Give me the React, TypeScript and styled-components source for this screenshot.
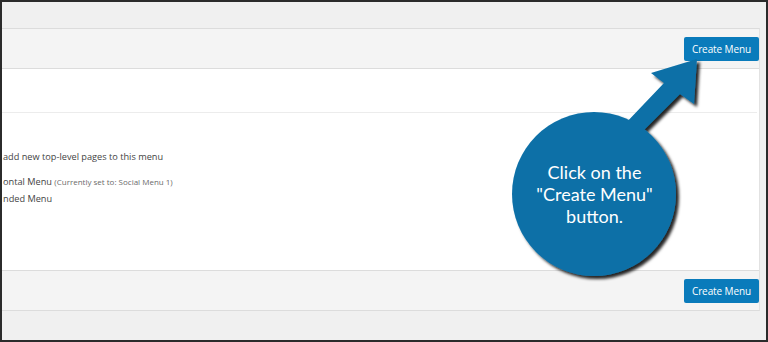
import React from 'react';
import styled, { createGlobalStyle } from 'styled-components';

const GlobalStyle = createGlobalStyle`
  html, body { margin: 0; padding: 0; }
  body { font-family: "Open Sans", "Liberation Sans", sans-serif; }
  * { box-sizing: border-box; }
`;

const Frame = styled.div`
  position: relative;
  width: 768px;
  height: 342px;
  border: 2px solid #2b2b2b;
  background: #f0f0f0;
  display: flex;
  flex-direction: column;
  overflow: hidden;
`;

const TopGap = styled.div`
  height: 26px;
  flex: none;
`;

const Panel = styled.div`
  margin-right: 6px;
  border-top: 1px solid #dcdcdc;
  border-bottom: 1px solid #dcdcdc;
  border-right: 1px solid #e2e2e2;
  display: flex;
  flex-direction: column;
`;

const Bar = styled.div<{ $top?: boolean }>`
  height: 40px;
  background: #f4f4f4;
  display: flex;
  align-items: center;
  justify-content: flex-end;
  ${p => (p.$top ? 'border-bottom: 1px solid #dcdcdc;' : 'border-top: 1px solid #dcdcdc;')}
`;

const Button = styled.button`
  height: 24px;
  width: 75px;
  padding: 0;
  border: none;
  border-radius: 2px;
  background: #0a7bbb;
  color: #fff;
  font-family: "Open Sans", "Liberation Sans", sans-serif;
  font-size: 10px;
  letter-spacing: -0.1px;
  cursor: pointer;
`;

const Body = styled.div`
  height: 201px;
  background: #fff;
  display: flex;
  flex-direction: column;
`;

const Separator = styled.div`
  margin-top: 43px;
  height: 1px;
  background: #ececec;
  margin-right: 2px;
`;

const Settings = styled.div`
  padding: 37px 0 0 1px;
  display: flex;
  flex-direction: column;
  color: #444;
  font-size: 9.2px;
`;

const Line = styled.div<{ $gap?: number }>`
  margin-top: ${p => p.$gap ?? 0}px;
  line-height: 14px;
  white-space: nowrap;
`;

const Hint = styled.span`
  color: #6b6b6b;
  font-size: 8px;
`;

const BottomGap = styled.div`
  flex: 1;
`;

const Callout = styled.div`
  position: absolute;
  left: 506px;
  top: 52px;
  width: 200px;
  height: 226px;
`;

const Shape = styled.svg`
  position: absolute;
  left: 0;
  top: 0;
  overflow: visible;
`;

const Bubble = styled.div`
  position: absolute;
  left: 4px;
  top: 59px;
  width: 165px;
  height: 162px;
  display: flex;
  flex-direction: column;
  align-items: center;
  justify-content: center;
  color: #fff;
  font-family: Lato, "Open Sans", sans-serif;
  font-size: 18px;
  line-height: 22px;
  text-align: center;
`;

export default function App() {
  return (
    <>
      <GlobalStyle />
      <Frame>
        <TopGap />
        <Panel>
          <Bar $top>
            <Button>Create Menu</Button>
          </Bar>
          <Body>
            <Separator />
            <Settings>
              <Line>add new top-level pages to this menu</Line>
              <Line $gap={11}>
                ontal Menu <Hint>(Currently set to: Social Menu 1)</Hint>
              </Line>
              <Line $gap={3}>nded Menu</Line>
            </Settings>
          </Body>
          <Bar>
            <Button>Create Menu</Button>
          </Bar>
        </Panel>
        <BottomGap />
        <Callout>
          <Shape width="200" height="226" viewBox="0 0 200 226">
            <defs>
              <filter id="sh" x="-20%" y="-20%" width="150%" height="150%">
                <feDropShadow dx="3" dy="3" stdDeviation="1.6" floodColor="#000" floodOpacity="0.85" />
              </filter>
            </defs>
            <g filter="url(#sh)" fill="#0b70a7">
              <circle cx="86" cy="140" r="82" />
              <polygon points="115,72 156,29 143,19 189,5 186,50 172,40 131,81" />
            </g>
          </Shape>
          <Bubble>
            <span>Click on the</span>
            <span>"Create Menu"</span>
            <span>button.</span>
          </Bubble>
        </Callout>
      </Frame>
    </>
  );
}
